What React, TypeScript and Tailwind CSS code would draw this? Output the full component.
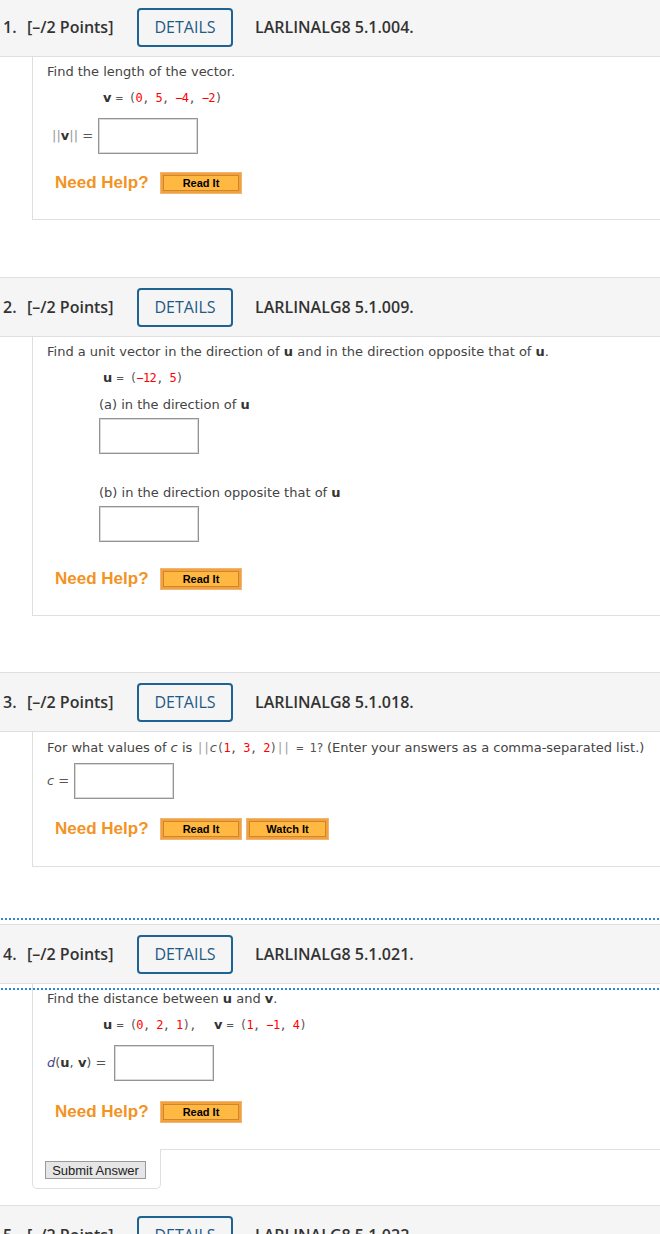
import React from "react";

const R = ({ children }: { children: React.ReactNode }) => (
  <span className="text-[#ff0000]">{children}</span>
);

const Mono = ({ children, className = "" }: { children: React.ReactNode; className?: string }) => (
  <span className={"font-['DejaVu_Sans_Mono',monospace] text-[12px] tracking-[-0.6px] text-[#555] " + className}>{children}</span>
);

const B = ({ children }: { children: React.ReactNode }) => (
  <b className="font-['DejaVu_Sans',sans-serif] font-bold text-[#333]">{children}</b>
);

function Header({ n, code, outlined }: { n: number; code: string; outlined?: boolean }) {
  return (
    <div
      className={
        "h-[60px] bg-[#f5f5f5] border-y border-[#dfdfdf] flex items-center font-['Open_Sans',sans-serif] text-[#333] " +
        (outlined ? "outline-2 outline-dotted outline-offset-[4px] outline-[#2f86d6]" : "")
      }
    >
      <div className="w-[137px] pl-[3px] flex items-center text-[16px] font-semibold">
        <span className="w-[24px]">{n}.</span>
        <span>[–/2 Points]</span>
      </div>
      <div className="w-[96px] h-[39px] border-2 border-[#1f6393] rounded-[4px] flex items-center justify-center text-[16px] text-[#1f5a86]">
        DETAILS
      </div>
      <div className="ml-[22px] text-[16px] font-semibold whitespace-nowrap">{code}</div>
    </div>
  );
}

function HelpBtn({ label, w }: { label: string; w: string }) {
  return (
    <div className={"h-[22px] bg-[#f6a038] border border-[#ecb77c] p-[2px] " + w}>
      <div className="h-full border border-[#cf8530] bg-[#ffb943] flex items-center justify-center font-['Liberation_Sans',Arial,sans-serif] font-bold text-[11px] text-black leading-none">
        {label}
      </div>
    </div>
  );
}

function NeedHelp({ watch, className = "" }: { watch?: boolean; className?: string }) {
  return (
    <div className={"h-[22px] flex items-center ml-[8px] " + className}>
      <span className="w-[105px] font-['Liberation_Sans',Arial,sans-serif] font-bold text-[17px] text-[#f39323] leading-[22px]">
        Need Help?
      </span>
      <HelpBtn label="Read It" w="w-[82px]" />
      {watch && (
        <div className="ml-[4px]">
          <HelpBtn label="Watch It" w="w-[83px]" />
        </div>
      )}
    </div>
  );
}

const Box = () => (
  <div className="w-[100px] h-[36px] border border-[#949494] bg-white shadow-[inset_0_0_0_1px_#d9d9d9]" />
);

const Line = ({ children, className = "" }: { children: React.ReactNode; className?: string }) => (
  <div className={"h-[18px] leading-[18px] whitespace-nowrap flex items-center " + className}>
    <span>{children}</span>
  </div>
);

export default function App() {
  return (
    <div className="-mt-[3px] bg-white w-[660px] overflow-hidden font-['DejaVu_Sans',Verdana,sans-serif] text-[13px] text-[#444] pb-[40px]">
      {/* Q1 */}
      <Header n={1} code="LARLINALG8 5.1.004." />
      <div className="ml-[32px] border-l border-b border-[#dfdfdf] pl-[14px] pt-[6px] pb-[25px]">
        <Line>Find the length of the vector.</Line>
        <Line className="mt-[8px] pl-[56px]">
          <B>v</B> <Mono>= (<R>0</R>, <R>5</R>, <R>−4</R>, <R>−2</R>)</Mono>
        </Line>
        <div className="mt-[11px] h-[36px] flex items-center">
          <span className="w-[51px] pl-[5px] text-[#555]">
            <span className="text-[#999]">||</span>
            <B>v</B>
            <span className="text-[#999]">||</span> =
          </span>
          <Box />
        </div>
        <NeedHelp className="mt-[18px]" />
      </div>

      {/* Q2 */}
      <div className="mt-[57px]">
        <Header n={2} code="LARLINALG8 5.1.009." />
      </div>
      <div className="ml-[32px] border-l border-b border-[#dfdfdf] pl-[14px] pt-[6px] pb-[25px]">
        <Line>
          Find a unit vector in the direction of <B>u</B> and in the direction opposite that of <B>u</B>.
        </Line>
        <Line className="mt-[8px] pl-[56px]">
          <B>u</B> <Mono>= (<R>−12</R>, <R>5</R>)</Mono>
        </Line>
        <Line className="mt-[9px] pl-[52px]">
          (a) in the direction of <B>u</B>
        </Line>
        <div className="mt-[4px] pl-[52px]">
          <Box />
        </div>
        <Line className="mt-[30px] pl-[52px]">
          (b) in the direction opposite that of <B>u</B>
        </Line>
        <div className="mt-[4px] pl-[52px]">
          <Box />
        </div>
        <NeedHelp className="mt-[26px]" />
      </div>

      {/* Q3 */}
      <div className="mt-[56px]">
        <Header n={3} code="LARLINALG8 5.1.018." />
      </div>
      <div className="ml-[32px] border-l border-b border-[#dfdfdf] pl-[14px] pt-[7px] pb-[26px]">
        <Line>
          For what values of <i>c</i> is{" "}
          <Mono>
            <span className="text-[#999]">||</span>
            <i className="font-['DejaVu_Sans',sans-serif] text-[13px] tracking-normal">c</i>(<R>1</R>, <R>3</R>, <R>2</R>)
            <span className="text-[#999]">||</span> = 1?
          </Mono>{" "}
          (Enter your answers as a comma-separated list.)
        </Line>
        <div className="mt-[6px] h-[36px] flex items-center">
          <span className="w-[27px] text-[#555]">
            <i>c</i> =
          </span>
          <Box />
        </div>
        <NeedHelp watch className="mt-[19px]" />
      </div>

      {/* Q4 */}
      <div className="mt-[57px]">
        <Header n={4} code="LARLINALG8 5.1.021." outlined />
      </div>
      <div className="ml-[32px] border-l border-[#dfdfdf] pl-[14px] pt-[6px] pb-[26px]">
        <Line>
          Find the distance between <B>u</B> and <B>v</B>.
        </Line>
        <Line className="mt-[8px] pl-[56px]">
          <B>u</B> <Mono>= (<R>0</R>, <R>2</R>, <R>1</R>),</Mono>
          <span className="inline-block w-[18px]" />
          <B>v</B> <Mono>= (<R>1</R>, <R>−1</R>, <R>4</R>)</Mono>
        </Line>
        <div className="mt-[11px] h-[36px] flex items-center">
          <span className="w-[67px] text-[#555]">
            <i className="text-[#4a4a8a]">d</i>(<B>u</B>, <B>v</B>) =
          </span>
          <Box />
        </div>
        <NeedHelp className="mt-[20px]" />
      </div>
      <div className="flex">
        <div className="ml-[32px] w-[129px] border-l border-r border-b border-[#dfdfdf] rounded-b-[5px] pl-[12px] pt-[12px] pb-[9px]">
          <div className="w-[101px] h-[18px] bg-[#e6e6e6] border border-[#9a9a9a] flex items-center justify-center font-['Liberation_Sans',Arial,sans-serif] text-[13px] text-[#222] leading-none">
            Submit Answer
          </div>
        </div>
        <div className="flex-1 border-t border-[#dfdfdf]" />
      </div>

      {/* Q5 */}
      <div className="mt-[16px]">
        <Header n={5} code="LARLINALG8 5.1.022." />
      </div>
    </div>
  );
}
